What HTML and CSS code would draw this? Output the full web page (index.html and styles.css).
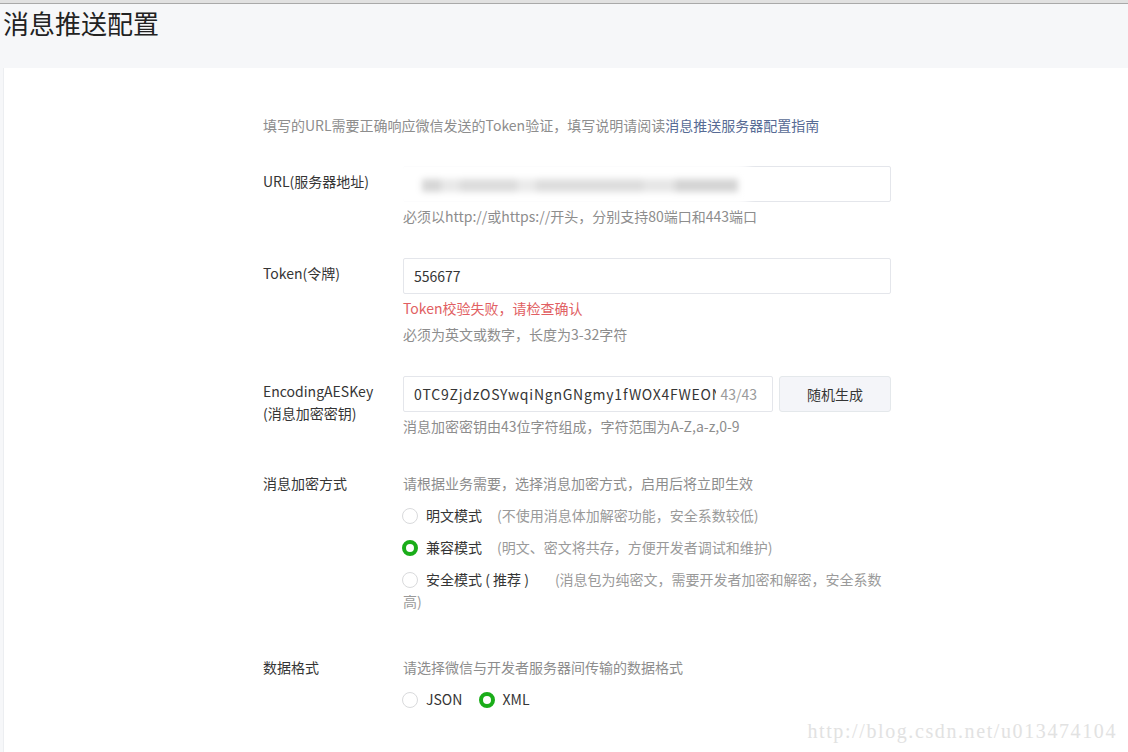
FILE: index.html
```html
<!DOCTYPE html>
<html lang="zh-CN">
<head>
    <meta charset="UTF-8">
    <title>消息推送配置</title>
    <link rel="stylesheet" href="styles.css">
</head>
<body>
    <div class="top-bar"></div>

    <div class="page-header">
        <h1>消息推送配置</h1>
    </div>

    <div class="panel">
        <div class="config-form">
            <p class="intro">填写的URL需要正确响应微信发送的Token验证，填写说明请阅读<a href="#">消息推送服务器配置指南</a></p>

            <!-- URL -->
            <div class="form-row">
                <label class="row-label">URL(服务器地址)</label>
                <div class="row-body">
                    <div class="input-box">
                        <input type="text" value="">
                        <div class="blurred"><span></span></div>
                    </div>
                    <p class="help">必须以http://或https://开头，分别支持80端口和443端口</p>
                </div>
            </div>

            <!-- Token -->
            <div class="form-row">
                <label class="row-label">Token(令牌)</label>
                <div class="row-body">
                    <div class="input-box">
                        <input type="text" value="556677">
                    </div>
                    <p class="help error">Token校验失败，请检查确认</p>
                    <p class="help">必须为英文或数字，长度为3-32字符</p>
                </div>
            </div>

            <!-- EncodingAESKey -->
            <div class="form-row">
                <label class="row-label">EncodingAESKey<br>(消息加密密钥)</label>
                <div class="row-body">
                    <div class="key-line">
                        <div class="input-box key-box">
                            <input type="text" value="0TC9ZjdzOSYwqiNgnGNgmy1fWOX4FWEONbQ2mR7kPz">
                            <span class="counter">43/43</span>
                        </div>
                        <button type="button" class="btn">随机生成</button>
                    </div>
                    <p class="help">消息加密密钥由43位字符组成，字符范围为A-Z,a-z,0-9</p>
                </div>
            </div>

            <!-- 加密方式 -->
            <div class="form-row mode-row">
                <label class="row-label">消息加密方式</label>
                <div class="row-body">
                    <p class="field-text">请根据业务需要，选择消息加密方式，启用后将立即生效</p>
                    <div class="radio-item">
                        <span class="radio"></span><span class="radio-name">明文模式</span><span class="radio-desc">(不使用消息体加解密功能，安全系数较低)</span>
                    </div>
                    <div class="radio-item">
                        <span class="radio checked"></span><span class="radio-name">兼容模式</span><span class="radio-desc">(明文、密文将共存，方便开发者调试和维护)</span>
                    </div>
                    <div class="radio-item">
                        <span class="radio"></span><span class="radio-name">安全模式 ( 推荐 )</span><span class="radio-desc wide">(消息包为纯密文，需要开发者加密和解密，安全系数</span><br><span class="radio-desc tail">高)</span>
                    </div>
                </div>
            </div>

            <!-- 数据格式 -->
            <div class="form-row">
                <label class="row-label">数据格式</label>
                <div class="row-body">
                    <p class="field-text">请选择微信与开发者服务器间传输的数据格式</p>
                    <div class="radio-item inline-radios">
                        <span class="radio"></span><span class="radio-name">JSON</span>
                        <span class="radio checked"></span><span class="radio-name">XML</span>
                    </div>
                </div>
            </div>
        </div>
    </div>

    <div class="watermark">http://blog.csdn.net/u013474104</div>
</body>
</html>
```

FILE: styles.css
```css
* {
    box-sizing: border-box;
}

html, body {
    margin: 0;
    height: 100%;
}

body {
    font-family: "Noto Sans CJK SC", "Microsoft YaHei", sans-serif;
    font-size: 14px;
    color: #353535;
    background: #f6f7f9;
    overflow: hidden;
}

.top-bar {
    height: 4px;
    background: #e1e1e1;
    border-bottom: 1px solid #a9a9a9;
}

.page-header {
    height: 64px;
    padding: 0 3px;
}

.page-header h1 {
    margin: 0;
    font-size: 26px;
    font-weight: normal;
    line-height: 37px;
    color: #222;
}

.panel {
    margin-left: 3px;
    min-height: 700px;
    background: #fff;
    border-left: 1px solid #eceef1;
    padding-top: 46px;
}

.config-form {
    width: 628px;
    margin-left: 259px;
}

.intro {
    margin: 0 0 30px;
    line-height: 22px;
    color: #8d8d8d;
}

.intro a {
    color: #576b95;
    text-decoration: none;
}

.form-row {
    display: flex;
    margin-bottom: 29px;
}

.mode-row {
    margin-bottom: 40px;
}

.row-label {
    width: 140px;
    flex-shrink: 0;
    padding-top: 4px;
    line-height: 22px;
    color: #353535;
}

.row-body {
    flex: 1;
}

.input-box {
    position: relative;
    display: flex;
    align-items: center;
    height: 36px;
    border: 1px solid #e4e6eb;
    border-radius: 2px;
    background: #fff;
}

.input-box input {
    flex: 1;
    min-width: 0;
    height: 100%;
    border: 0;
    outline: none;
    padding: 0 10px;
    font: inherit;
    color: #353535;
    background: transparent;
}

.blurred {
    position: absolute;
    top: -4px;
    left: -10px;
    width: 362px;
    height: 42px;
    background: #fff;
    border-radius: 0 20px 20px 0;
    filter: blur(3px);
}

.blurred span {
    position: absolute;
    left: 28px;
    top: 16px;
    width: 316px;
    height: 13px;
    background: linear-gradient(90deg, #d6d6d6 0 6%, #e8e8e8 6% 12%, #dcdcdc 12% 30%, #eaeaea 30% 36%, #dddddd 36% 70%, #e6e6e6 70% 80%, #d4d4d4 80% 100%);
}

.help {
    margin: 1px 0 0;
    line-height: 26px;
    color: #8d8d8d;
}

.help.error {
    color: #e15f63;
}

.help.error + .help {
    margin-top: 0;
}

.key-line {
    display: flex;
    gap: 6px;
}

.key-box {
    width: 370px;
}

.key-box input {
    padding-right: 4px;
    letter-spacing: 0.75px;
}

.counter {
    padding-right: 15px;
    color: #9a9a9a;
}

.btn {
    width: 112px;
    height: 36px;
    border: 1px solid #e4e8eb;
    border-radius: 3px;
    background: #f4f5f9;
    font: inherit;
    color: #353535;
    cursor: pointer;
}

.field-text {
    margin: 0;
    padding-top: 4px;
    line-height: 22px;
    color: #8d8d8d;
}

.radio-item {
    margin-top: 10px;
    line-height: 22px;
}

.radio {
    display: inline-block;
    width: 16px;
    height: 16px;
    margin: 0 8px 0 -1px;
    vertical-align: -3px;
    border: 1px solid #d9dadc;
    border-radius: 50%;
    background: #fff;
}

.radio.checked {
    border: 4px solid #1aad19;
}

.radio-name {
    color: #353535;
}

.radio-desc {
    margin-left: 15px;
    color: #9a9a9a;
}

.radio-desc.wide {
    margin-left: 26px;
}

.radio-desc.tail {
    margin-left: 0;
}

.inline-radios .radio-name + .radio {
    margin-left: 13px;
}

.watermark {
    position: absolute;
    right: 11px;
    bottom: 9px;
    font-family: "Liberation Serif", serif;
    font-size: 20px;
    letter-spacing: 1.6px;
    color: #e2e2e2;
}
```
